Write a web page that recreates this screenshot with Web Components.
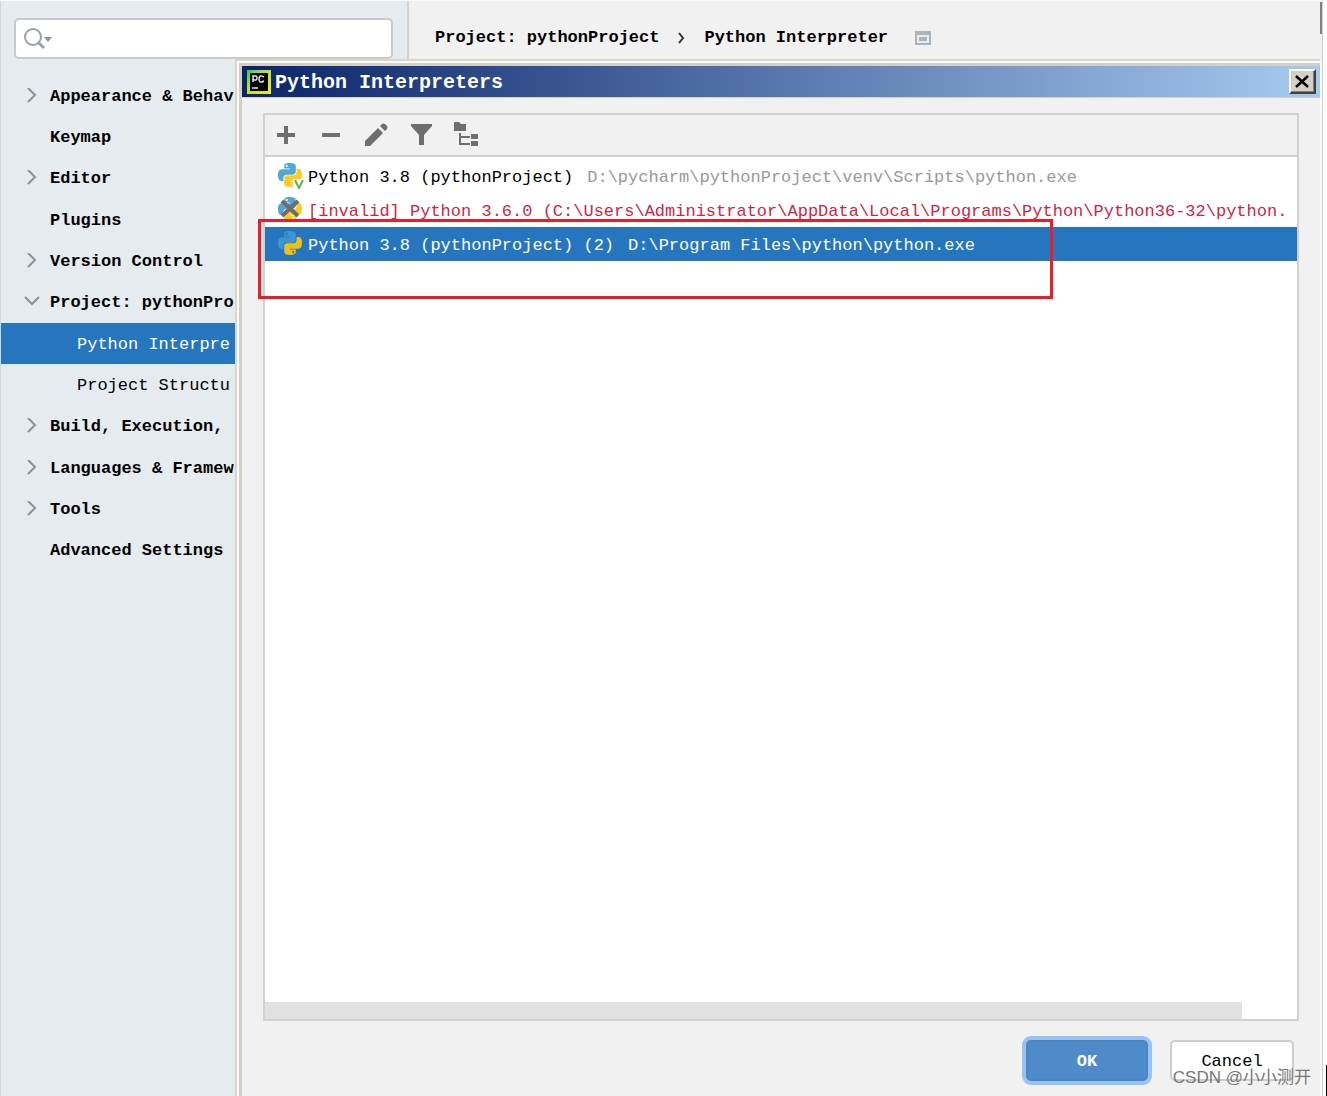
<!DOCTYPE html>
<html lang="en">
<head>
<meta charset="utf-8">
<title>Settings</title>
<style>
* {
  box-sizing: border-box;
}

html, body {
  height: 100%;
  margin: 0;
}

body {
  background: #fff;
  color: #000;
  font: 17px/24px "Liberation Mono", "Noto Sans CJK SC", monospace;
  overflow: hidden;
}
</style>
</head>
<body>

<settings-window>
  <settings-sidebar slot="sidebar">
    <search-box></search-box>
    <nav-tree>
      <tree-item state="closed">Appearance &amp; Behav</tree-item>
      <tree-item>Keymap</tree-item>
      <tree-item state="closed">Editor</tree-item>
      <tree-item>Plugins</tree-item>
      <tree-item state="closed">Version Control</tree-item>
      <tree-item state="open">Project: pythonPro</tree-item>
      <tree-item child selected>Python Interpre</tree-item>
      <tree-item child>Project Structu</tree-item>
      <tree-item state="closed">Build, Execution,</tree-item>
      <tree-item state="closed">Languages &amp; Framew</tree-item>
      <tree-item state="closed">Tools</tree-item>
      <tree-item>Advanced Settings</tree-item>
    </nav-tree>
  </settings-sidebar>
  <bread-crumb slot="header">
    <span>Project: pythonProject</span>
    <span slot="page">Python Interpreter</span>
  </bread-crumb>
  <interpreters-dialog slot="dialog" heading="Python Interpreters">
    <interpreter-row icon="venv">Python 3.8 (pythonProject)<span slot="path">D:\pycharm\pythonProject\venv\Scripts\python.exe</span></interpreter-row>
    <interpreter-row icon="invalid">[invalid] Python 3.6.0 (C:\Users\Administrator\AppData\Local\Programs\Python\Python36-32\python.</interpreter-row>
    <interpreter-row icon="python" selected>Python 3.8 (pythonProject) (2)<span slot="path">D:\Program Files\python\python.exe</span></interpreter-row>
    <dialog-button slot="actions" primary>OK</dialog-button>
    <dialog-button slot="actions">Cancel</dialog-button>
  </interpreters-dialog>
  <water-mark slot="dialog">CSDN @小小测开</water-mark>
</settings-window>

<script>
function attach(el, html) {
  el.attachShadow({ mode: "open" });
  el.shadowRoot.innerHTML = "<style>* { box-sizing: border-box; }</style>" + html;
}

class SettingsWindow extends HTMLElement {
  constructor() {
    super();
    attach(this, `
<style>
:host {
  position: relative;
  display: flex;
  min-height: 100%;
  padding-right: 4px;
  border-top: 1px solid #fafafa;
}
.main {
  flex: 1;
  background: #f1f1f1;
  border-left: 2px solid #d1d4d6;
}
.edge {
  width: 3px;
  flex: none;
  background: #fff;
  border-right: 1px solid #d4cdc6;
}
.caret {
  position: absolute;
  right: 0;
  bottom: 0;
  width: 1px;
  height: 31px;
  background: #000;
}
</style>
<slot name="sidebar"></slot>
<div class="main"><slot name="header"></slot></div>
<div class="edge">
  <!-- sliver of the editor behind the settings window -->
  <svg width="2" height="1000" viewBox="0 0 2 1000" shape-rendering="crispEdges" aria-hidden="true">
    <path fill="#f1f1f1" d="M0 0h2v199H0z"/>
    <path fill="#808080" d="M0 1h2v32H0z"/>
    <path fill="#d0d0d0" d="M0 67h2v1H0zM0 117h2v1H0zM0 163h2v36H0zM0 723h2v1H0zM0 769h2v1H0z"/>
    <path fill="#fffbdc" d="M0 199h2v36H0z"/>
    <path fill="#f1f1f1" d="M0 724h2v45H0z"/>
    <path fill="#19198c" d="M0 793h2v5H0zM0 965h2v4H0zM0 975h2v4H0z"/>
    <path fill="#f5b5b0" d="M0 798h2v4H0z"/>
    <path fill="#222" d="M0 853h2v5H0z"/>
    <path fill="#f0a850" d="M0 858h2v4H0z"/>
  </svg>
</div>
<slot name="dialog"></slot>
<div class="caret"></div>`);
  }
}
customElements.define("settings-window", SettingsWindow);

class SettingsSidebar extends HTMLElement {
  constructor() {
    super();
    attach(this, `
<style>
:host {
  display: block;
  width: 407px;
  flex: none;
  padding: 17px 14px 0 0;
  background: #e6ebef;
  border-left: 1px solid #d3d6d9;
}
</style>
<slot></slot>`);
  }
}
customElements.define("settings-sidebar", SettingsSidebar);

class SearchBox extends HTMLElement {
  constructor() {
    super();
    attach(this, `
<style>
:host {
  display: flex;
  align-items: center;
  height: 41px;
  margin-left: 13px;
  padding-left: 8px;
  background: #fff;
  border: 2px solid #c8cacc;
  border-radius: 5px;
}
svg {
  flex: none;
}
input {
  flex: 1;
  min-width: 0;
  border: 0;
  outline: 0;
  background: none;
  font: inherit;
}
</style>
<svg width="28" height="22" viewBox="0 0 28 22" aria-hidden="true">
  <circle cx="9" cy="9" r="8" fill="none" stroke="#99a3a8" stroke-width="2"/>
  <path d="M14 14l6 6" stroke="#99a3a8" stroke-width="3"/>
  <path d="M20 9h8l-4 5z" fill="#8d979c"/>
</svg>
<input type="text" aria-label="Search settings">`);
  }
}
customElements.define("search-box", SearchBox);

class NavTree extends HTMLElement {
  constructor() {
    super();
    attach(this, `
<style>
:host {
  display: block;
  padding-top: 16px;
  margin-right: -14px;
}
nav {
  display: grid;
  grid-auto-rows: 1fr;
  height: 496px;
}
</style>
<nav aria-label="Settings"><slot></slot></nav>`);
  }
}
customElements.define("nav-tree", NavTree);

class TreeItem extends HTMLElement {
  constructor() {
    super();
    attach(this, `
<style>
:host {
  display: block;
  font-weight: bold;
}
:host([child]) {
  font-weight: normal;
}
:host([selected]) {
  background: #2675bf;
  color: #fff;
}
a {
  display: flex;
  align-items: center;
  height: 100%;
  padding: 2px 0 0 22px;
  color: inherit;
  text-decoration: none;
  white-space: nowrap;
}
:host([child]) a {
  padding-left: 49px;
}
svg {
  flex: none;
  width: 18px;
  height: 18px;
  margin-right: 9px;
  fill: none;
  stroke: #8f9294;
  stroke-width: 2;
}
</style>
<a href="#"><svg viewBox="0 0 18 18" aria-hidden="true"><path></path></svg><slot></slot></a>`);
  }

  connectedCallback() {
    const shapes = { closed: "M5 0l7 7-7 7", open: "M2 3l7 7 7-7" };
    const d = shapes[this.getAttribute("state")];
    if (d) this.shadowRoot.querySelector("path").setAttribute("d", d);
  }
}
customElements.define("tree-item", TreeItem);

class BreadCrumb extends HTMLElement {
  constructor() {
    super();
    attach(this, `
<style>
:host {
  display: flex;
  align-items: center;
  gap: 19px;
  padding: 25px 26px 0;
  font-weight: bold;
  white-space: nowrap;
}
.menu {
  margin-left: 8px;
}
</style>
<slot></slot>
<svg width="7" height="12" viewBox="0 0 7 12" aria-hidden="true"><path d="M1 1l4 5-4 5" fill="none" stroke="#333" stroke-width="2"/></svg>
<slot name="page"></slot>
<svg class="menu" width="16" height="14" viewBox="0 0 16 14" shape-rendering="crispEdges" aria-hidden="true">
  <path d="M1 2h14v11H1z" fill="#e9edef" stroke="#aab5bb" stroke-width="2"/>
  <path d="M0 0h16v4H0zM4 6h8v4H4z" fill="#aab5bb"/>
</svg>`);
  }
}
customElements.define("bread-crumb", BreadCrumb);

class InterpretersDialog extends HTMLElement {
  constructor() {
    super();
    attach(this, `
<style>
:host {
  position: absolute;
  inset: 58px 7px 0 235px;
  display: flex;
  flex-direction: column;
  background: #f1f1f1;
  border: 2px solid #d9d6d0;
  border-width: 2px 0 0 2px;
}
.frame {
  flex: 1;
  display: flex;
  flex-direction: column;
  border: solid #d4d0c8;
  border-width: 3px 0 0 3px;
  outline: 2px solid #fafaf8;
  margin: 2px 0 0 2px;
}
header {
  display: flex;
  align-items: center;
  height: 32px;
  padding: 0 4px 0 5px;
  background: linear-gradient(90deg, #0a246a, #a6caf0);
  border-bottom: 1px solid #d4d0c8;
  color: #fff;
  font-size: 20px;
  font-weight: bold;
}
h1 {
  flex: 1;
  margin: 0;
  padding: 2px 0 0 4px;
  font: inherit;
}
.close {
  display: grid;
  place-items: center;
  width: 27px;
  height: 25px;
  padding: 0;
  background: #d4d0c8;
  border: 2px solid;
  border-color: #fff #404040 #404040 #fff;
  box-shadow: inset -1px -1px #808080;
}
.panel {
  position: relative;
  flex: 1;
  display: flex;
  flex-direction: column;
  margin: 15px 21px 0;
  background: #fff;
  border: 2px solid #d1d1d1;
}
.toolbar {
  display: flex;
  height: 42px;
  background: #f1f1f1;
  border-bottom: 2px solid #d1d1d1;
}
.toolbar button {
  display: grid;
  place-items: center;
  width: 45px;
  padding: 0 3px 1px 0;
  border: 0;
  background: none;
}
.toolbar svg {
  fill: #6e6e6e;
}
.list {
  flex: 1;
  min-width: 0;
  padding-top: 2px;
  overflow: hidden;
}
.scroll {
  width: calc(100% - 55px);
  height: 17px;
  background: #e1e1e1;
}
.marker {
  position: absolute;
  top: 104px;
  left: -7px;
  width: 77%;
  height: 80px;
  border: 3px solid #ee1c25;
}
footer {
  display: flex;
  justify-content: flex-end;
  gap: 22px;
  padding: 19px 26px 15px;
}
</style>
<div class="frame">
  <header>
    <svg width="24" height="24" viewBox="0 0 24 24" aria-hidden="true">
      <defs><linearGradient id="pc" x2="1" y2="1"><stop stop-color="#21d745"/><stop offset=".35" stop-color="#b9dc26"/><stop offset="1" stop-color="#f0ec2a"/></linearGradient></defs>
      <path fill="url(#pc)" d="M0 0h24v24H0z"/>
      <path d="M3 3h18v18H3z"/>
      <path d="M6 12V6h3q1 0 1 2t-1 2H6M17 7q-5-3-5 2t5 2M5 18h6" fill="none" stroke="#e8e8e8" stroke-width="1.500"/>
    </svg>
    <h1></h1>
    <button class="close" aria-label="Close">
      <svg width="15" height="13" viewBox="0 0 15 13"><path d="M1 1l12 11M13 1L1 12" stroke="#000" stroke-width="2.500"/></svg>
    </button>
  </header>
  <div class="panel">
    <div class="toolbar">
      <button aria-label="Add"><svg width="18" height="18"><path d="M7 0h4v7h7v4h-7v7H7v-7H0V7h7z"/></svg></button>
      <button aria-label="Remove"><svg width="18" height="18"><path d="M0 7h18v4H0z"/></svg></button>
      <button aria-label="Edit"><svg width="24" height="24"><path d="M1 18L14 5l5 5L6 23H1zM16 3l2-2q1.500-1 3 0l2 2q1 1.500 0 3l-2 2z"/></svg></button>
      <button aria-label="Filter"><svg width="21" height="21"><path d="M0 0h21v2l-8 9v10H8V11L0 2z"/></svg></button>
      <button aria-label="Show paths"><svg width="25" height="25"><path d="M0 0h5l2 2h5v7H0zM5 11h2v3h9v2H7v5h9v2H5zM17 12h7v5h-7zM17 19h7v5h-7z"/></svg></button>
    </div>
    <div class="list" role="listbox" aria-label="Interpreters"><slot></slot></div>
    <div class="scroll"></div>
    <div class="marker"></div>
  </div>
  <footer><slot name="actions"></slot></footer>
</div>`);
  }

  connectedCallback() {
    this.shadowRoot.querySelector("h1").textContent = this.getAttribute("heading") || "";
  }
}
customElements.define("interpreters-dialog", InterpretersDialog);

const snakes = `
<path class="blue" d="M11.914 0C5.820 0 6.200 2.656 6.200 2.656l.007 2.752h5.814v.826H3.900S0 5.789 0 11.969c0 6.180 3.403 5.960 3.403 5.960h2.030v-2.867s-.109-3.420 3.350-3.420h5.766s3.240.052 3.240-3.148V3.202S18.280 0 11.914 0zM8.708 1.850a1.050 1.050 0 1 1 0 2.100 1.050 1.050 0 0 1 0-2.100z"/>
<path class="yellow" d="M12.087 24c6.092 0 5.712-2.656 5.712-2.656l-.007-2.752h-5.814v-.826h8.123s3.900.445 3.900-5.735c0-6.180-3.404-5.960-3.404-5.960h-2.030v2.867s.109 3.420-3.350 3.420H9.452s-3.240-.052-3.240 3.148v5.292S5.720 24 12.087 24zM15.293 22.150a1.050 1.050 0 1 1 0-2.100 1.050 1.050 0 0 1 0 2.100z"/>`;

const badges = {
  python: "",
  venv: `<path d="M15 16h11v10H15z" fill="#fff"/><path d="M17 17l4 8 4-8" fill="none" stroke="#62b543" stroke-width="2"/>`,
  invalid: `<path d="M4 4l16 15M20 4L4 19" stroke="#6e6e6e" stroke-width="4"/>`
};

class InterpreterRow extends HTMLElement {
  constructor() {
    super();
    attach(this, `
<style>
:host {
  display: flex;
  align-items: center;
  height: 34px;
  padding-left: 13px;
  white-space: nowrap;
}
:host([icon="invalid"]) {
  color: #d21f45;
}
:host([selected]) {
  background: #2675bf;
  color: #fff;
}
svg {
  flex: none;
  width: 26px;
  height: 26px;
  margin-right: 4px;
}
.blue {
  fill: #4ea7d4;
}
.yellow {
  fill: #fccb1c;
}
:host([selected]) .blue {
  fill: #3e96cf;
}
:host([selected]) .yellow {
  fill: #efc01a;
}
.text {
  display: flex;
  gap: 14px;
  padding-top: 4px;
}
::slotted([slot="path"]) {
  color: #999;
}
:host([selected]) ::slotted([slot="path"]) {
  color: #fff;
}
</style>
<svg viewBox="0 0 26 26" aria-hidden="true"></svg>
<div class="text"><span><slot></slot></span><slot name="path"></slot></div>`);
  }

  connectedCallback() {
    this.setAttribute("role", "option");
    this.shadowRoot.querySelector("svg").innerHTML = snakes + badges[this.getAttribute("icon")];
  }
}
customElements.define("interpreter-row", InterpreterRow);

class DialogButton extends HTMLElement {
  constructor() {
    super();
    attach(this, `
<style>
:host {
  display: block;
}
button {
  display: block;
  width: 124px;
  height: 41px;
  padding: 2px 0 0;
  background: #fff;
  border: 2px solid #cdcdcd;
  border-radius: 5px;
  color: #000;
  font: inherit;
}
:host([primary]) button {
  width: 122px;
  background: #4f8bc9;
  border-color: #4a86c5;
  box-shadow: 0 0 0 4px #97c3f3;
  color: #fff;
  font-weight: bold;
}
</style>
<button><slot></slot></button>`);
  }
}
customElements.define("dialog-button", DialogButton);

class WaterMark extends HTMLElement {
  constructor() {
    super();
    attach(this, `
<style>
:host {
  position: absolute;
  right: 16px;
  bottom: 6px;
  color: #777;
  font: 17px/24px "Liberation Sans", "Noto Sans CJK SC", sans-serif;
  white-space: nowrap;
}
</style>
<slot></slot>`);
  }
}
customElements.define("water-mark", WaterMark);
</script>
</body>
</html>
